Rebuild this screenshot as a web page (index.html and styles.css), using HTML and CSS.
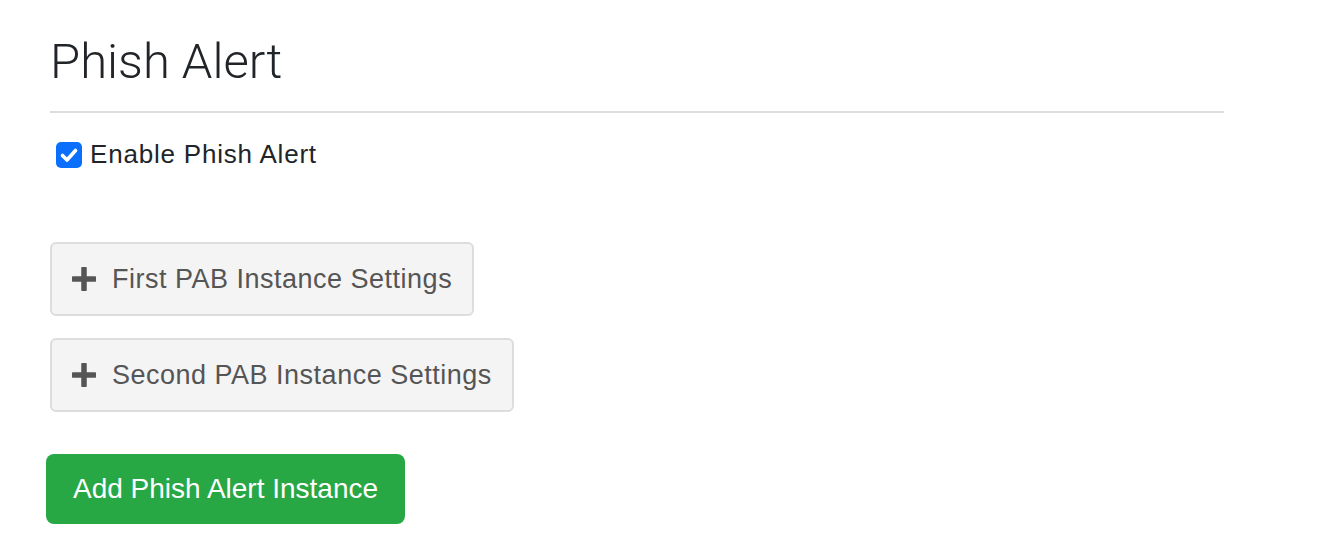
FILE: index.html
```html
<!DOCTYPE html>
<html lang="en">

<head>
    <meta charset="UTF-8">
    <title>Phish Alert</title>
    <link rel="stylesheet" href="styles.css">
</head>

<body>
    <div class="page">
        <h1 class="title">Phish Alert</h1>
        <hr class="divider">

        <label class="check-row">
            <span class="checkbox">
                <svg viewBox="0 0 26 26" width="26" height="26">
                    <path d="M6.5 13.5l4.5 4.5 8.5-9.5" fill="none" stroke="#fff" stroke-width="3.6"
                        stroke-linecap="round" stroke-linejoin="round" />
                </svg>
            </span>
            Enable Phish Alert
        </label>

        <div class="instances">
            <button class="toggle">
                <svg class="plus" viewBox="0 0 24 24" width="24" height="24">
                    <path d="M12 1.5v21M1.5 12h21" stroke="#555" stroke-width="5.5" stroke-linecap="round" />
                </svg>
                First PAB Instance Settings
            </button>
            <button class="toggle">
                <svg class="plus" viewBox="0 0 24 24" width="24" height="24">
                    <path d="M12 1.5v21M1.5 12h21" stroke="#555" stroke-width="5.5" stroke-linecap="round" />
                </svg>
                Second PAB Instance Settings
            </button>
        </div>

        <button class="add-btn">Add Phish Alert Instance</button>
    </div>
</body>

</html>
```

FILE: styles.css
```css
* {
    box-sizing: border-box;
}

body {
    margin: 0;
    font-family: 'Liberation Sans', Arial, sans-serif;
    color: #222;
    background: #fff;
}

.page {
    padding: 0 108px 0 50px;
}

.title {
    font-family: 'Roboto', 'Liberation Sans', sans-serif;
    font-weight: 300;
    font-size: 49px;
    line-height: 59px;
    margin: 32px 0 20px;
    color: #212529;
}

.divider {
    border: 0;
    border-top: 2px solid #ddd;
    margin: 0 0 26px;
}

.check-row {
    display: flex;
    align-items: center;
    gap: 8px;
    font-size: 26px;
    letter-spacing: 0.8px;
    color: #212529;
    margin-left: 6px;
}

.checkbox {
    width: 26px;
    height: 26px;
    border-radius: 5px;
    background: #0b6ffd;
    display: flex;
}

.instances {
    display: flex;
    flex-direction: column;
    align-items: flex-start;
    gap: 22px;
    margin-top: 72px;
}

.toggle {
    display: flex;
    align-items: center;
    gap: 16px;
    height: 74px;
    padding: 0 20px;
    background: #f4f4f4;
    border: 2px solid #ddd;
    border-radius: 6px;
    font-family: 'Liberation Sans', Arial, sans-serif;
    font-size: 27px;
    letter-spacing: 0.5px;
    color: #555;
}

.add-btn {
    margin: 42px 0 0 -4px;
    height: 70px;
    padding: 0 27px;
    background: #28a745;
    border: 0;
    border-radius: 8px;
    color: #fff;
    font-family: 'Liberation Sans', Arial, sans-serif;
    font-size: 28px;
}
```
